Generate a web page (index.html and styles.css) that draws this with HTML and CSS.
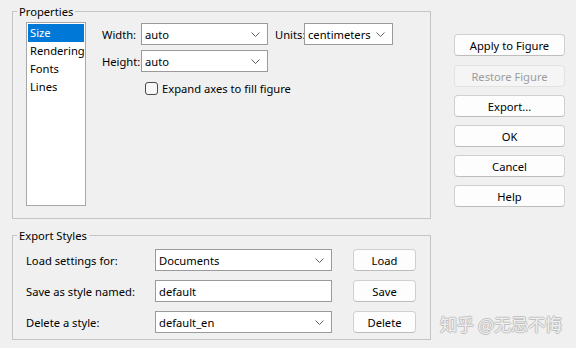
FILE: index.html
```html
<!DOCTYPE html>
<html lang="en">
<head>
  <meta charset="UTF-8" />
  <meta name="viewport" content="width=device-width, initial-scale=1.0" />
  <title>Export Setup</title>
  <link rel="stylesheet" href="styles.css">
</head>
<body>
  <div class="dialog">
    <div class="top">
      <!-- Properties group -->
      <fieldset class="group props">
        <legend>Properties</legend>
        <div class="props-body">
          <ul class="listbox">
            <li class="selected">Size</li>
            <li>Rendering</li>
            <li>Fonts</li>
            <li>Lines</li>
          </ul>
          <div class="size-form">
            <div class="row">
              <span class="lbl">Width:</span>
              <div class="combo combo-size"><span>auto</span><svg class="chev" width="9" height="5" viewBox="0 0 9 5"><path d="M0.5 0.5 L4.5 4.5 L8.5 0.5" fill="none" stroke="#606060" stroke-width="1"/></svg></div>
              <span class="lbl units">Units:</span>
              <div class="combo combo-units"><span>centimeters</span><svg class="chev" width="9" height="5" viewBox="0 0 9 5"><path d="M0.5 0.5 L4.5 4.5 L8.5 0.5" fill="none" stroke="#606060" stroke-width="1"/></svg></div>
            </div>
            <div class="row">
              <span class="lbl">Height:</span>
              <div class="combo combo-size"><span>auto</span><svg class="chev" width="9" height="5" viewBox="0 0 9 5"><path d="M0.5 0.5 L4.5 4.5 L8.5 0.5" fill="none" stroke="#606060" stroke-width="1"/></svg></div>
            </div>
            <label class="check"><span class="box"></span>Expand axes to fill figure</label>
          </div>
        </div>
      </fieldset>

      <!-- Dialog buttons -->
      <div class="actions">
        <button class="btn first">Apply to Figure</button>
        <button class="btn" disabled>Restore Figure</button>
        <button class="btn">Export...</button>
        <button class="btn">OK</button>
        <button class="btn">Cancel</button>
        <button class="btn">Help</button>
      </div>
    </div>

    <!-- Export styles group -->
    <fieldset class="group export">
      <legend>Export Styles</legend>
      <div class="style-grid">
        <span class="lbl">Load settings for:</span>
        <div class="combo"><span>Documents</span><svg class="chev" width="9" height="5" viewBox="0 0 9 5"><path d="M0.5 0.5 L4.5 4.5 L8.5 0.5" fill="none" stroke="#606060" stroke-width="1"/></svg></div>
        <button class="btn">Load</button>

        <span class="lbl">Save as style named:</span>
        <div class="textbox">default</div>
        <button class="btn">Save</button>

        <span class="lbl">Delete a style:</span>
        <div class="combo"><span>default_en</span><svg class="chev" width="9" height="5" viewBox="0 0 9 5"><path d="M0.5 0.5 L4.5 4.5 L8.5 0.5" fill="none" stroke="#606060" stroke-width="1"/></svg></div>
        <button class="btn">Delete</button>
      </div>
    </fieldset>

    <div class="watermark">知乎 @无忌不悔</div>
  </div>
</body>
</html>
```

FILE: styles.css
```css
html, body {
  margin: 0;
  padding: 0;
  background-color: #f0f0f0;
}
body {
  font-family: 'Noto Sans', 'Open Sans', sans-serif;
  font-size: 11.2px;
  color: #000;
  width: 576px;
  height: 348px;
  overflow: hidden;
}
.dialog {
  position: relative;
  height: 348px;
  padding: 4px 0 0 12px;
  box-sizing: border-box;
}
.top {
  display: flex;
}
.group {
  margin: 0;
  padding: 0;
  border: 1px solid #c4c4c4;
  box-sizing: border-box;
  min-width: 0;
}
.group legend {
  margin-left: 4px;
  padding: 0 2px;
  line-height: 15px;
}
.props {
  width: 419px;
  height: 215px;
}
.props-body {
  display: flex;
  padding: 3px 0 0 13px;
}
.listbox {
  list-style: none;
  margin: 0;
  padding: 1px;
  width: 60px;
  height: 184px;
  box-sizing: border-box;
  background: #fff;
  border: 1px solid #a8a8a8;
}
.listbox li {
  height: 18px;
  line-height: 18px;
  padding-left: 2px;
  white-space: nowrap;
}
.listbox li.selected {
  background: #0078d7;
  color: #fff;
}
.size-form {
  margin: 1px 0 0 16px;
  display: flex;
  flex-direction: column;
  gap: 5px;
}
.row {
  display: flex;
  align-items: center;
  height: 22px;
}
.lbl {
  white-space: nowrap;
}
.size-form .lbl {
  width: 39px;
}
.size-form .units {
  width: 29px;
  margin-left: 7px;
}
.combo, .textbox {
  display: flex;
  align-items: center;
  justify-content: space-between;
  height: 22px;
  box-sizing: border-box;
  background: #fff;
  border: 1px solid #9a9a9a;
  padding: 0 7px 0 3px;
  white-space: nowrap;
}
.combo-size {
  width: 127px;
}
.combo-units {
  width: 89px;
}
.check {
  display: flex;
  align-items: center;
  gap: 4px;
  margin: 4px 0 0 43px;
  height: 15px;
}
.check .box {
  width: 13px;
  height: 13px;
  box-sizing: border-box;
  border: 1px solid #4a4a4a;
  border-radius: 3px;
  background: #f8f8f8;
}
.actions {
  display: flex;
  flex-direction: column;
  gap: 8px;
  margin: 30px 0 0 23px;
}
.btn {
  width: 111px;
  height: 22px;
  padding: 0;
  font-family: inherit;
  font-size: 11.2px;
  color: #000;
  background: #fdfdfd;
  border: 1px solid #d0d0d0;
  border-bottom-color: #bdbdbd;
  border-radius: 4px;
}
.btn.first {
  margin-bottom: 1px;
}
.btn:disabled {
  color: #9d9d9d;
  background: #f5f5f5;
  border-color: #e2e2e2;
}
.export {
  width: 419px;
  height: 112px;
  margin-top: 9px;
}
.style-grid {
  display: grid;
  grid-template-columns: 129px 177px 63px;
  row-gap: 9px;
  align-items: center;
  padding: 6px 0 0 13px;
}
.style-grid .btn {
  width: 63px;
  margin-left: 21px;
}
.watermark {
  position: absolute;
  right: 14px;
  bottom: 12px;
  font-family: 'Noto Sans CJK SC', sans-serif;
  font-size: 17px;
  color: #efefef;
  text-shadow: 1px 0 0 #c2c2c2, -1px 0 0 #c2c2c2, 0 1px 0 #c2c2c2, 0 -1px 0 #c2c2c2;
}
```
